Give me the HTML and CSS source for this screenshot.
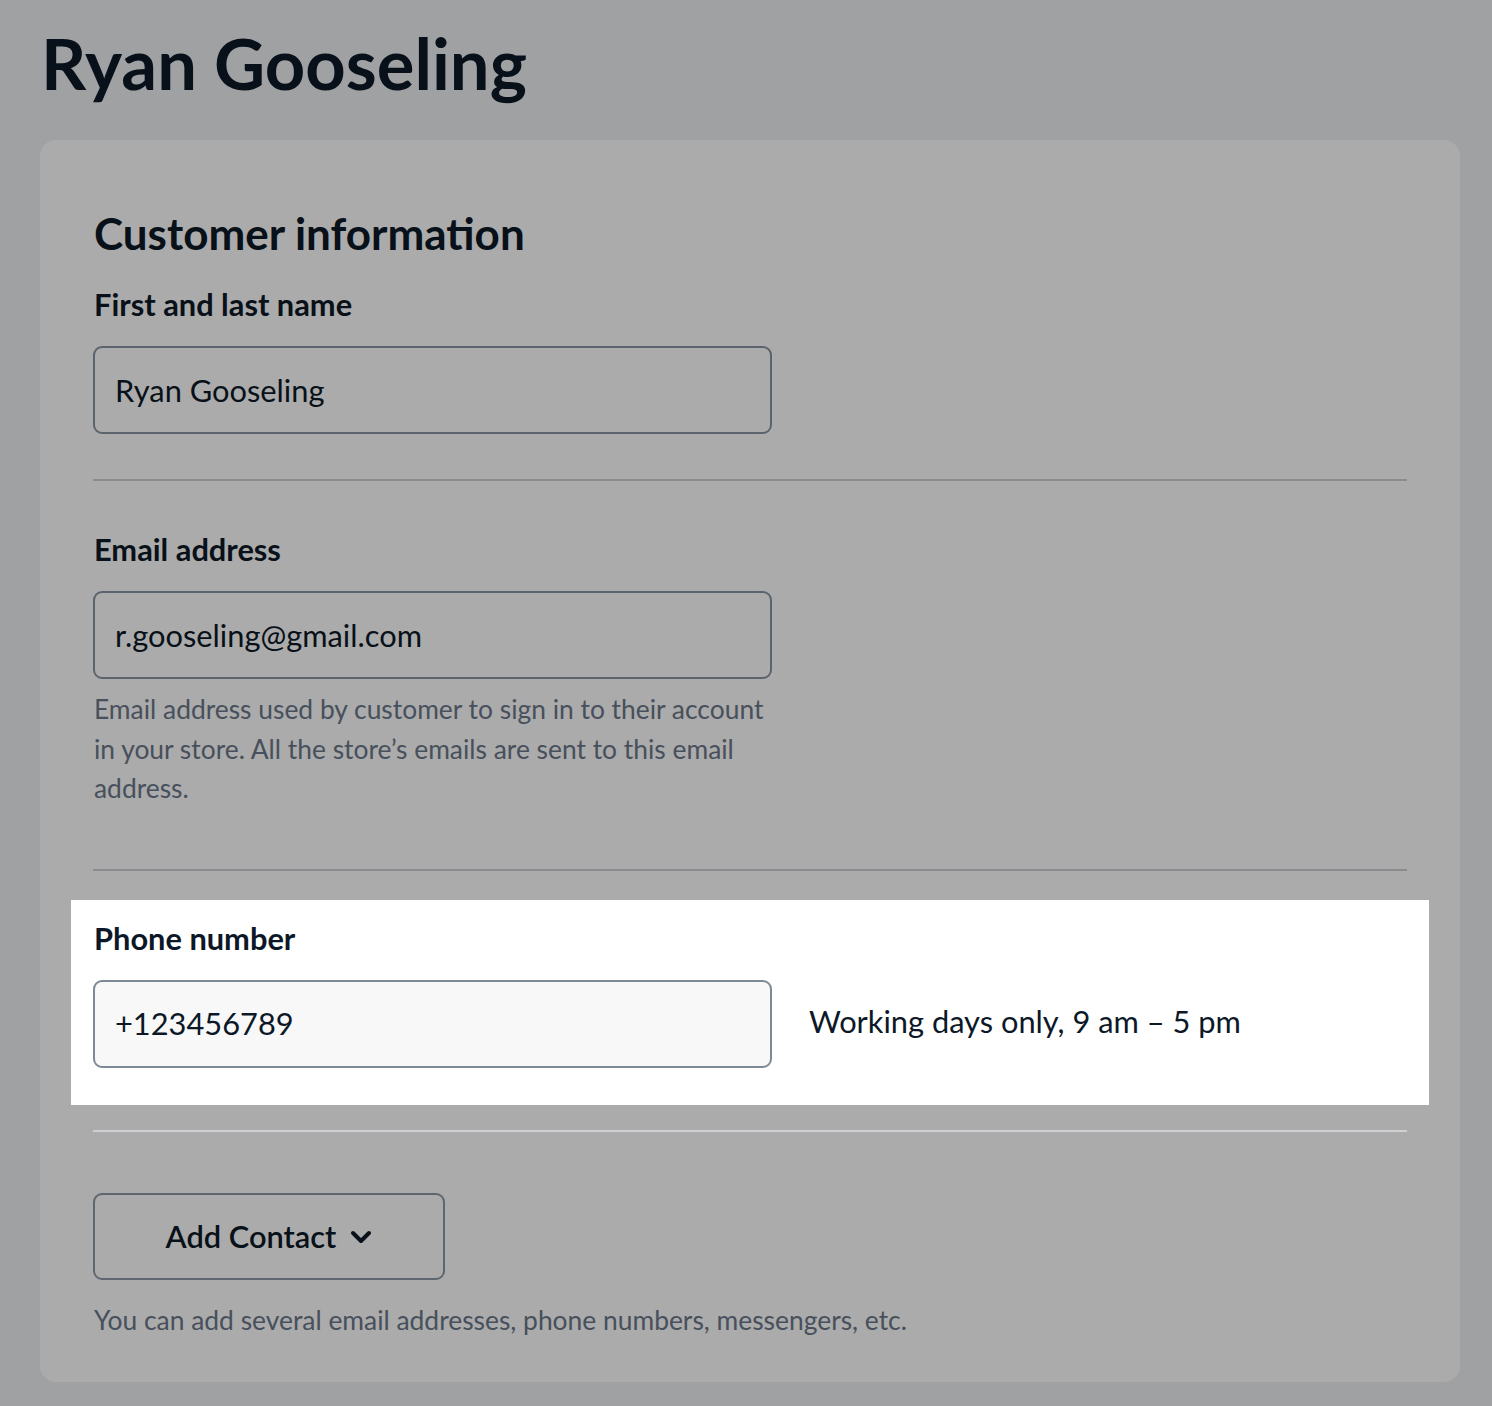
FILE: index.html
```html
<!DOCTYPE html>
<html lang="en">
<head>
    <meta charset="UTF-8">
    <meta name="viewport" content="width=device-width, initial-scale=1.0">
    <title>Ryan Gooseling</title>
    <link rel="stylesheet" href="styles.css">
</head>
<body>
    <h1 class="page-title">Ryan Gooseling</h1>

    <div class="card">
        <h2 class="card-title">Customer information</h2>

        <div class="field field-first">
            <label for="fullName">First and last name</label>
            <input type="text" id="fullName" name="fullName" value="Ryan Gooseling">
        </div>

        <div class="field field-email">
            <label for="email">Email address</label>
            <input type="text" id="email" name="email" value="r.gooseling@gmail.com">
            <p class="hint">Email address used by customer to sign in to their account in your store. All the store’s emails are sent to this email address.</p>
        </div>

        <!-- Highlighted field, everything else is dimmed -->
        <div class="field spotlight">
            <label for="phone">Phone number</label>
            <div class="field-row">
                <input type="text" id="phone" name="phone" value="+123456789">
                <span class="field-note">Working days only, 9 am – 5 pm</span>
            </div>
        </div>

        <div class="contacts">
            <button type="button" class="btn-outline">
                Add Contact
                <svg width="22" height="14" viewBox="0 0 22 14" aria-hidden="true">
                    <polyline points="3,3 11,11 19,3" fill="none" stroke="currentColor" stroke-width="4" stroke-linecap="round" stroke-linejoin="round"/>
                </svg>
            </button>
            <p class="hint hint-contacts">You can add several email addresses, phone numbers, messengers, etc.</p>
        </div>
    </div>
</body>
</html>
```

FILE: styles.css
```css
body {
    font-family: 'Lato', 'Noto Sans', sans-serif;
    background-color: #eff0f3;
    margin: 0;
    padding: 0 32px 24px 40px;
    min-height: 100vh;
    box-sizing: border-box;
    color: #0c1827;
}

.page-title {
    font-size: 70.5px;
    line-height: 1.2;
    font-weight: 700;
    margin: 0;
    padding-top: 21px;
    margin-bottom: 34px;
    margin-left: 1px;
}

.card {
    background-color: #fff;
    border-radius: 16px;
    padding: 67px 53px 42px 53px;
}

.card-title {
    font-size: 44px;
    line-height: 1.2;
    font-weight: 700;
    margin: 0 0 0 1px;
}

label {
    display: block;
    font-size: 30.8px;
    line-height: 36px;
    font-weight: 700;
    margin-bottom: 23px;
    padding-left: 1px;
}

input[type="text"] {
    display: block;
    box-sizing: border-box;
    width: 679px;
    height: 88px;
    padding: 0 20px;
    border: 2px solid #8894a3;
    border-radius: 9px;
    background-color: #fff;
    font-family: inherit;
    font-size: 30.8px;
    color: #0c1827;
    outline: none;
}

.field {
    border-bottom: 2px solid #ced0d4;
}

.field-first {
    padding: 28px 0 45px;
}

.field-email {
    padding: 51px 0 60px;
}

.hint {
    font-size: 26.4px;
    line-height: 39.5px;
    color: #6b7889;
    margin: 11px 0 0;
    width: 679px;
    padding-left: 1px;
}

/* Spotlight: dims the rest of the page around this block */
.spotlight {
    position: relative;
    z-index: 1;
    margin: 29px -22px 25px -22px;
    padding: 21px 22px 37px 22px;
    background-color: #fff;
    border-bottom: none;
    box-shadow: 0 0 0 9999px rgba(0, 0, 0, 0.33);
}

.spotlight::after {
    content: '';
    position: absolute;
    left: 22px;
    right: 22px;
    bottom: -27px;
    border-bottom: 2px solid #ced0d4;
}

.spotlight input[type="text"] {
    background-color: #f8f8f8;
    border-color: #7f8996;
}

.field-row {
    display: flex;
    align-items: center;
    gap: 37px;
}

.field-note {
    font-size: 30.8px;
    margin-top: -4px;
}

.contacts {
    padding-top: 63px;
}

.btn-outline {
    display: flex;
    align-items: center;
    justify-content: center;
    gap: 14px;
    width: 352px;
    height: 87px;
    padding: 0;
    background: transparent;
    border: 2px solid #8d99a8;
    border-radius: 9px;
    font-family: inherit;
    font-size: 30.8px;
    font-weight: 600;
    color: #0c1827;
    cursor: pointer;
}

.btn-outline svg {
    margin-top: 2px;
}

.hint-contacts {
    width: auto;
    font-size: 26.4px;
    line-height: 40px;
    margin-top: 20px;
}
```
